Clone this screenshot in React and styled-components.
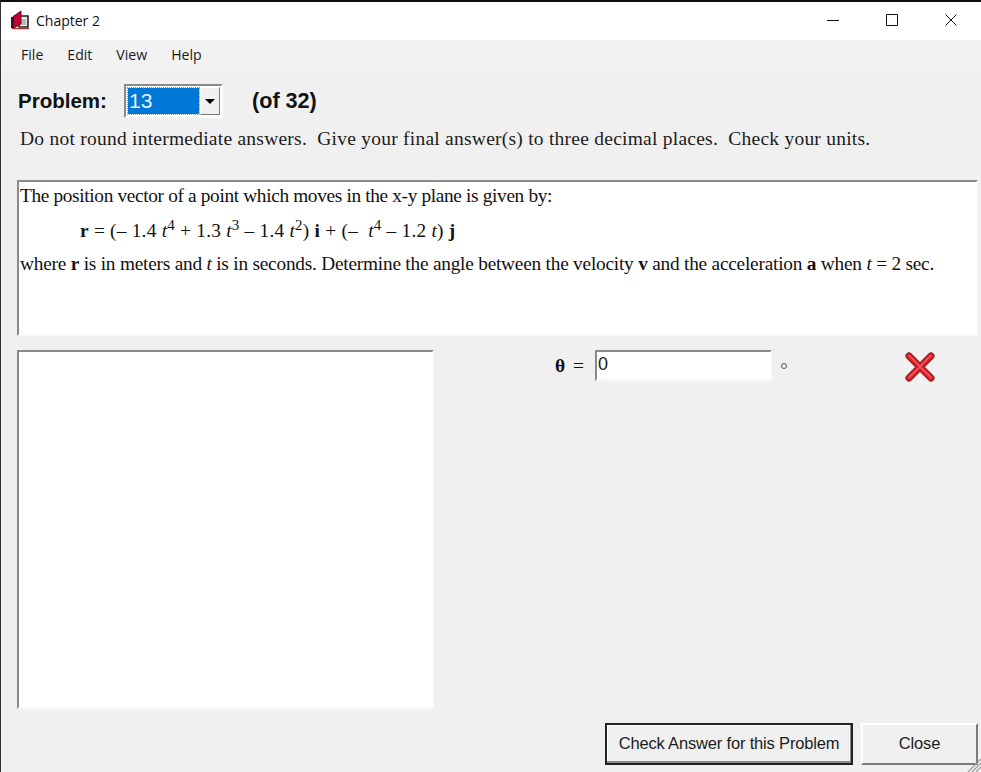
import React from "react";
import styled, { createGlobalStyle } from "styled-components";

const GlobalStyle = createGlobalStyle`
  html, body {
    margin: 0;
    padding: 0;
    height: 100%;
    background: #f0f0f0;
    overflow: hidden;
  }
  #root {
    height: 100%;
  }
`;

const Win = styled.div`
  width: 981px;
  height: 772px;
  box-sizing: border-box;
  display: flex;
  flex-direction: column;
  background: #f0f0f0;
  border-top: 2px solid #101010;
  border-left: 1px solid #333;
  position: relative;
  overflow: hidden;
`;

const TitleBar = styled.div`
  height: 38px;
  box-sizing: border-box;
  flex: none;
  display: flex;
  align-items: center;
  background: #fff;
  padding: 0 1px 2px 9px;
`;

const TitleText = styled.span`
  font: 14px "Open Sans", "Noto Sans", sans-serif;
  color: #111;
  margin-left: 6px;
  flex: 1;
`;

const WinButton = styled.div`
  width: 59px;
  height: 36px;
  display: flex;
  align-items: center;
  justify-content: center;
`;

const MenuBar = styled.div`
  height: 30px;
  box-sizing: border-box;
  flex: none;
  display: flex;
  align-items: center;
  gap: 24px;
  padding: 0 0 2px 20px;
  background: #f2f2f2;
`;

const MenuItem = styled.span`
  font: 14.1px "Open Sans", "Noto Sans", sans-serif;
  color: #1a1a1a;
`;

const Content = styled.div`
  flex: 1;
  display: flex;
  flex-direction: column;
  padding: 14px 3px 0 16px;
  min-height: 0;
`;

const ProblemRow = styled.div`
  height: 34px;
  display: flex;
  align-items: center;
  font: bold 20.5px "Liberation Sans", Arial, sans-serif;
  color: #111;
`;

const ProblemLabel = styled.span`
  width: 107px;
  padding-left: 1px;
  box-sizing: border-box;
`;

const Combo = styled.div`
  width: 99px;
  height: 34px;
  box-sizing: border-box;
  display: flex;
  border: 2px solid;
  border-color: #8a8a8a #fbfbfb #fbfbfb #8a8a8a;
  padding: 2px 1px 2px 2px;
  background: #fff;
`;

const ComboValue = styled.div`
  flex: 1;
  background: #0078d7;
  color: #e8f2fb;
  outline: 1px dotted #e08a20;
  font: 21px "Liberation Sans", Arial, sans-serif;
  line-height: 26px;
  padding-left: 1px;
`;

const ComboArrow = styled.div`
  width: 20px;
  margin-left: 1px;
  margin-top: -1px;
  margin-bottom: -1px;
  box-sizing: border-box;
  display: flex;
  align-items: center;
  justify-content: center;
  background: #f0f0f0;
  border: 1px solid;
  border-color: #fff #777 #777 #fff;
  &::after {
    content: "";
    border-left: 5px solid transparent;
    border-right: 5px solid transparent;
    border-top: 5px solid #000;
  }
`;

const OfCount = styled.span`
  margin-left: 29px;
  font-size: 21.6px;
`;

const Instructions = styled.p`
  margin: 8px 0 0 3px;
  font: 19.5px "Liberation Serif", "Times New Roman", serif;
  line-height: 26px;
  color: #1c1c1c;
  white-space: pre;
  letter-spacing: 0.24px;
`;

const Sunken = styled.div`
  box-sizing: border-box;
  background: #fff;
  border: 2px solid;
  border-color: #8a8a8a #fafafa #fafafa #8a8a8a;
`;

const QuestionBox = styled(Sunken)`
  height: 156px;
  margin-top: 28px;
  padding: 1px 0 0 1px;
  font: 19.3px "Liberation Serif", "Times New Roman", serif;
  color: #111;
`;

const QuestionLine = styled.div`
  height: ${(p) => p.$height || "33px"};
  line-height: 25px;
  white-space: pre;
  letter-spacing: ${(p) => p.$spacing || "0"};
  padding-left: ${(p) => (p.$indent ? "60px" : "0")};
`;

const Sup = styled.sup`
  font-size: 15px;
  line-height: 0;
`;

const Middle = styled.div`
  display: flex;
  margin-top: 14px;
`;

const FigureBox = styled(Sunken)`
  width: 417px;
  height: 359px;
  flex: none;
`;

const AnswerRow = styled.div`
  display: flex;
  align-items: flex-start;
  height: 36px;
  margin-left: 121px;
`;

const AnswerLabel = styled.span`
  width: 40px;
  font: 19.5px "Liberation Serif", "Times New Roman", serif;
  letter-spacing: 1.5px;
  line-height: 32px;
  color: #111;
  white-space: pre;
`;

const AnswerInput = styled(Sunken)`
  width: 177px;
  height: 31px;
  font: 18px "Liberation Sans", Arial, sans-serif;
  line-height: 24px;
  padding-left: 1px;
  color: #222;
`;

const Degree = styled.span`
  margin-left: 9px;
  width: 6px;
  height: 6px;
  margin-top: 13px;
  box-sizing: border-box;
  border: 1.3px solid #555;
  border-radius: 50%;
`;

const Cross = styled.svg`
  margin-left: 117px;
  margin-top: 1px;
  flex: none;
`;

const Footer = styled.div`
  display: flex;
  justify-content: flex-end;
  gap: 8px;
  margin-top: 14px;
`;

const Button = styled.button`
  box-sizing: border-box;
  height: 42px;
  width: ${(p) => p.$width};
  padding: 0 0 2px;
  background: #f0f0f0;
  font: 16.5px "Liberation Sans", Arial, sans-serif;
  letter-spacing: -0.17px;
  color: #1c1c1c;
  border: 2px solid;
  border-color: ${(p) =>
    p.$primary ? "#222 #222 #222 #222" : "#fff #7a7a7a #7a7a7a #fff"};
  box-shadow: ${(p) =>
    p.$primary ? "inset -1px -2px 0 #8a8a8a, inset 1px 1px 0 #fff" : "none"};
`;

const Grip = styled.svg`
  position: absolute;
  right: 0;
  bottom: 0;
`;

const BookIcon = () => (
  <svg width="20" height="20" viewBox="0 0 20 20">
    <path d="M1 7h3v11H1z" fill="#222" />
    <path d="M9 6h9v11H9z" fill="#e8e8e8" stroke="#222" strokeWidth="1.6" />
    <path d="M11 10h5M11 12h5M11 14h5" stroke="#888" strokeWidth="1" />
    <path d="M3 6.5l8-5.5v13l-8 4.5z" fill="#c00033" stroke="#400" strokeWidth="0.8" />
    <path d="M2 18.6h17" stroke="#a33" strokeWidth="1.2" />
  </svg>
);

const App = () => {
  return (
    <Win>
      <GlobalStyle />
      <TitleBar>
        <BookIcon />
        <TitleText>Chapter 2</TitleText>
        <WinButton>
          <svg width="12" height="12" viewBox="0 0 12 12">
            <path d="M0 6.5h12" stroke="#111" fill="none" />
          </svg>
        </WinButton>
        <WinButton>
          <svg width="12" height="12" viewBox="0 0 12 12">
            <path d="M.5.5h11v11H.5z" stroke="#111" fill="none" />
          </svg>
        </WinButton>
        <WinButton>
          <svg width="12" height="12" viewBox="0 0 12 12">
            <path d="M.5.5l11 11M11.5.5l-11 11" stroke="#111" fill="none" />
          </svg>
        </WinButton>
      </TitleBar>
      <MenuBar>
        <MenuItem>File</MenuItem>
        <MenuItem>Edit</MenuItem>
        <MenuItem>View</MenuItem>
        <MenuItem>Help</MenuItem>
      </MenuBar>
      <Content>
        <ProblemRow>
          <ProblemLabel>Problem:</ProblemLabel>
          <Combo>
            <ComboValue>13</ComboValue>
            <ComboArrow />
          </Combo>
          <OfCount>(of 32)</OfCount>
        </ProblemRow>
        <Instructions>
          {"Do not round intermediate answers.  Give your final answer(s) to three decimal places.  Check your units."}
        </Instructions>
        <QuestionBox>
          <QuestionLine $spacing="-0.33px" $height="35px">
            The position vector of a point which moves in the x-y plane is given by:
          </QuestionLine>
          <QuestionLine $indent $spacing="0.25px">
            <b>r</b> = (– 1.4 <i>t</i><Sup>4</Sup> + 1.3 <i>t</i><Sup>3</Sup> – 1.4 <i>t</i><Sup>2</Sup>) <b>i</b> + (–{"  "}<i>t</i><Sup>4</Sup> – 1.2 <i>t</i>) <b>j</b>
          </QuestionLine>
          <QuestionLine $spacing="-0.21px">
            where <b>r</b> is in meters and <i>t</i> is in seconds. Determine the angle between the velocity <b>v</b> and the acceleration <b>a</b> when <i>t</i> = 2 sec.
          </QuestionLine>
        </QuestionBox>
        <Middle>
          <FigureBox />
          <AnswerRow>
            <AnswerLabel>
              <b>θ</b> =
            </AnswerLabel>
            <AnswerInput>0</AnswerInput>
            <Degree />
            <Cross width="32" height="32" viewBox="0 0 32 32">
              <path d="M5 5l22 22M27 5L5 27" stroke="#8e1a1e" strokeWidth="7" strokeLinecap="round" />
              <path d="M5 5l22 22M27 5L5 27" stroke="#e0202a" strokeWidth="4.6" strokeLinecap="round" />
              <path d="M5 4.5l22 22M27 4.5L5 26.5" stroke="#f2636a" strokeWidth="1.2" strokeLinecap="round" />
            </Cross>
          </AnswerRow>
        </Middle>
        <Footer>
          <Button $primary $width="248px">Check Answer for this Problem</Button>
          <Button $width="117px">Close</Button>
        </Footer>
      </Content>
      <Grip width="16" height="16" viewBox="0 0 16 16">
        <path d="M16 3L3 16M16 7l-9 9M16 11l-5 5" stroke="#9a9a9a" strokeWidth="1.2" />
      </Grip>
    </Win>
  );
};

export default App;
